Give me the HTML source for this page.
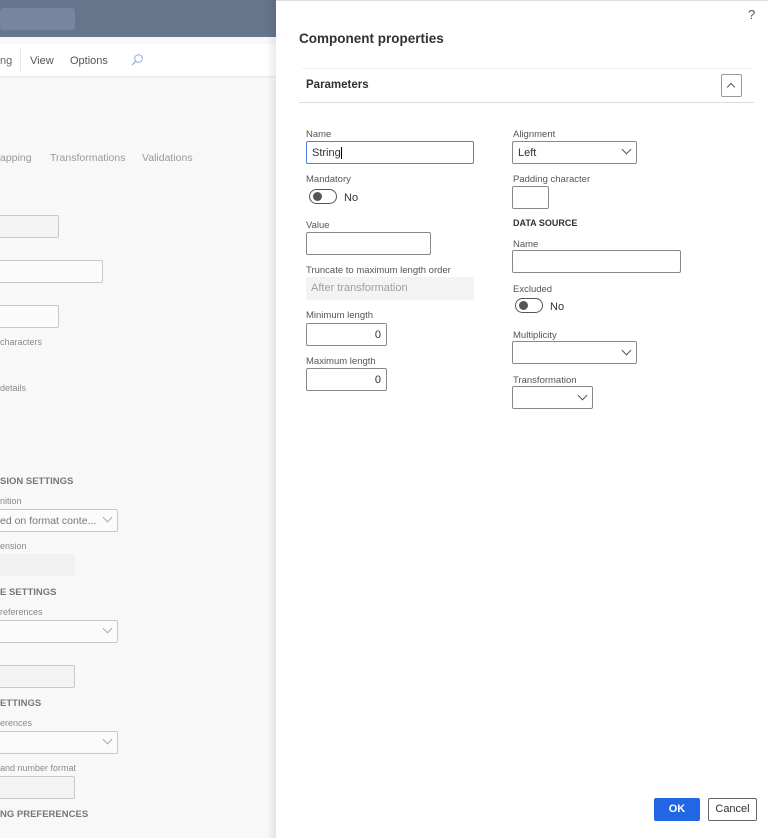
<!DOCTYPE html>
<html><head><style>
*{box-sizing:border-box;margin:0;padding:0}
body{width:768px;height:838px;position:relative;overflow:hidden;font-family:"Segoe UI","Liberation Sans",sans-serif;background:#f8f8f8;color:#323130}
.a{position:absolute}
.lbl{position:absolute;font-size:9.5px;color:#555}
.llbl{position:absolute;font-size:10px;color:#8a8a8a}
.inp{position:absolute;border:1px solid #8a8886;border-radius:2px;background:#fff;height:23px;font-size:11px;padding:0 5px;line-height:22px}
.linp{position:absolute;border:1px solid #c8c8c8;border-radius:2px;background:#fbfbfb;height:23px}
.hd{position:absolute;font-size:9.5px;font-weight:bold;color:#555}
.chev{position:absolute;width:7px;height:7px;border-right:1px solid #555;border-bottom:1px solid #555;transform:rotate(45deg)}
.tog{position:absolute;width:28px;height:15px;border:1px solid #555;border-radius:8px;background:#fff}
.tog:after{content:"";position:absolute;left:3px;top:2px;width:9px;height:9px;border-radius:50%;background:#555}
</style></head><body>
<div class="a" style="left:0;top:0;width:276px;height:37px;background:#66758b"></div>
<div class="a" style="left:0;top:8px;width:75px;height:22px;background:#7885a0;border-radius:3px"></div>
<div class="a" style="left:0;top:44px;width:276px;height:32px;background:#fff;box-shadow:0 1px 2px rgba(0,0,0,.08)"></div>
<div class="a" style="left:20px;top:49px;width:1px;height:22px;background:#e6e6e6"></div>
<div class="a" style="left:0;top:55px;font-size:11px;color:#666">ng</div>
<div class="a" style="left:30px;top:55px;font-size:11px;color:#555">View</div>
<div class="a" style="left:70px;top:55px;font-size:11px;color:#555">Options</div>
<svg class="a" style="left:130px;top:53px" width="14" height="14" viewBox="0 0 14 14"><circle cx="8.5" cy="5.5" r="3.8" fill="none" stroke="#8fa4e0" stroke-width="1"/><path d="M5.8 8.2 L2 12" stroke="#8fa4e0" stroke-width="1.1"/></svg>
<div class="a" style="left:0;top:152px;font-size:10.5px;color:#999">apping</div>
<div class="a" style="left:50px;top:152px;font-size:10.5px;color:#999">Transformations</div>
<div class="a" style="left:142px;top:152px;font-size:10.5px;color:#999">Validations</div>
<div class="linp" style="left:-3px;top:215px;width:62px;background:#f4f4f4"></div>
<div class="linp" style="left:-3px;top:260px;width:106px"></div>
<div class="linp" style="left:-3px;top:305px;width:62px"></div>
<div class="llbl" style="left:0;top:337px;font-size:9px">characters</div>
<div class="llbl" style="left:0;top:383px;font-size:9px">details</div>
<div class="hd" style="left:0;top:476px;color:#777">SION SETTINGS</div>
<div class="llbl" style="left:0;top:496px;font-size:9px">nition</div>
<div class="linp" style="left:-3px;top:509px;width:121px;font-size:10.5px;color:#777;padding:0 2px;line-height:22px">ed on format conte...</div>
<div class="chev" style="left:104px;top:514px;border-color:#aaa"></div>
<div class="llbl" style="left:0;top:541px;font-size:9px">ension</div>
<div class="a" style="left:0;top:554px;width:75px;height:22px;background:#f1f1f1"></div>
<div class="hd" style="left:0;top:587px;color:#777">E SETTINGS</div>
<div class="llbl" style="left:0;top:607px;font-size:9px">references</div>
<div class="linp" style="left:-3px;top:620px;width:121px"></div>
<div class="chev" style="left:104px;top:625px;border-color:#aaa"></div>
<div class="linp" style="left:-3px;top:665px;width:78px;background:#f3f3f3"></div>
<div class="hd" style="left:0;top:698px;color:#777">ETTINGS</div>
<div class="llbl" style="left:0;top:718px;font-size:9px">erences</div>
<div class="linp" style="left:-3px;top:731px;width:121px"></div>
<div class="chev" style="left:104px;top:736px;border-color:#aaa"></div>
<div class="llbl" style="left:0;top:763px;font-size:9px">and number format</div>
<div class="linp" style="left:-3px;top:776px;width:78px;background:#f3f3f3"></div>
<div class="hd" style="left:0;top:809px;color:#777">NG PREFERENCES</div>
<div class="a" style="left:266px;top:0;width:10px;height:838px;background:linear-gradient(to right,rgba(0,0,0,0),rgba(0,0,0,.08))"></div>

<div class="a" style="left:276px;top:0;width:492px;height:838px;background:#fff;border-top:1px solid #ddd"></div>
<div class="a" style="left:748px;top:7px;font-size:13px;color:#555">?</div>
<div class="a" style="left:299px;top:31px;font-size:13.5px;font-weight:600;color:#323130">Component properties</div>
<div class="a" style="left:302px;top:68px;width:450px;height:1px;background:#f0f0f0"></div>
<div class="a" style="left:306px;top:79px;font-size:11.5px;font-weight:600;color:#323130">Parameters</div>
<div class="a" style="left:721px;top:74px;width:21px;height:23px;border:1px solid #999;border-radius:2px"></div>
<div class="chev" style="left:728px;top:84px;transform:rotate(225deg);width:6px;height:6px"></div>
<div class="a" style="left:299px;top:102px;width:455px;height:1px;background:#ddd"></div>

<div class="lbl" style="left:306px;top:129px">Name</div>
<div class="inp" style="left:306px;top:141px;width:168px;border-color:#4d7ee0">String<span style="border-left:1px solid #000"></span></div>
<div class="lbl" style="left:306px;top:174px">Mandatory</div>
<div class="tog" style="left:309px;top:189px"></div>
<div class="a" style="left:344px;top:192px;font-size:11px">No</div>
<div class="lbl" style="left:306px;top:220px">Value</div>
<div class="inp" style="left:306px;top:232px;width:125px"></div>
<div class="lbl" style="left:306px;top:265px">Truncate to maximum length order</div>
<div class="a" style="left:306px;top:277px;width:168px;height:23px;background:#f3f3f3;font-size:11px;color:#a19f9d;padding:0 5px;line-height:23px">After transformation</div>
<div class="lbl" style="left:306px;top:310px">Minimum length</div>
<div class="inp" style="left:306px;top:323px;width:81px;text-align:right">0</div>
<div class="lbl" style="left:306px;top:356px">Maximum length</div>
<div class="inp" style="left:306px;top:368px;width:81px;text-align:right">0</div>

<div class="lbl" style="left:513px;top:129px">Alignment</div>
<div class="inp" style="left:512px;top:141px;width:125px">Left</div>
<div class="chev" style="left:623px;top:146px"></div>
<div class="lbl" style="left:513px;top:174px">Padding character</div>
<div class="inp" style="left:512px;top:186px;width:37px"></div>
<div class="hd" style="left:513px;top:218px;color:#323130;font-size:9px">DATA SOURCE</div>
<div class="lbl" style="left:513px;top:239px">Name</div>
<div class="inp" style="left:512px;top:250px;width:169px"></div>
<div class="lbl" style="left:513px;top:284px">Excluded</div>
<div class="tog" style="left:515px;top:298px"></div>
<div class="a" style="left:550px;top:301px;font-size:11px">No</div>
<div class="lbl" style="left:513px;top:330px">Multiplicity</div>
<div class="inp" style="left:512px;top:341px;width:125px"></div>
<div class="chev" style="left:623px;top:347px"></div>
<div class="lbl" style="left:513px;top:375px">Transformation</div>
<div class="inp" style="left:512px;top:386px;width:81px"></div>
<div class="chev" style="left:579px;top:392px"></div>

<div class="a" style="left:654px;top:798px;width:46px;height:23px;background:#2266e3;border-radius:2px;color:#fff;font-size:11px;font-weight:bold;text-align:center;line-height:23px">OK</div>
<div class="a" style="left:708px;top:798px;width:49px;height:23px;border:1px solid #666;border-radius:2px;font-size:11px;text-align:center;line-height:21px">Cancel</div>
</body></html>
